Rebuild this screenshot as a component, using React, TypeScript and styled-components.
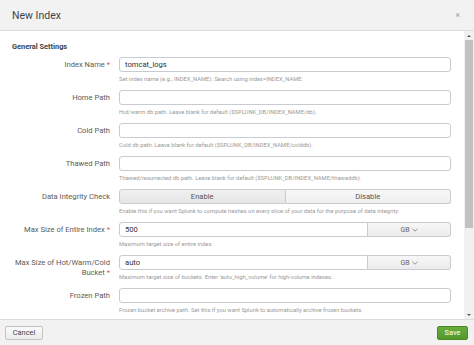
import styled, { createGlobalStyle } from 'styled-components';

const GlobalStyle = createGlobalStyle`
  html, body {
    margin: 0;
    padding: 0;
    width: 474px;
    height: 345px;
    overflow: hidden;
    background: #fff;
    font-family: Roboto, "Liberation Sans", Arial, sans-serif;
    color: #333;
  }
  * { box-sizing: border-box; }
`;

const Modal = styled.div`
  width: 474px;
  height: 345px;
  display: flex;
  flex-direction: column;
  background: #fff;
`;

const Header = styled.div`
  height: 31px;
  flex: none;
  display: flex;
  align-items: center;
  justify-content: space-between;
  padding: 0 14px 0 12px;
  background: #f2f2f2;
  border-bottom: 1px solid #dcdcdc;
`;

const Title = styled.div`
  font-size: 10.5px;
  color: #3c444d;
`;

const Close = styled.span`
  font-size: 9px;
  color: #a0a0a0;
  line-height: 1;
`;

const Body = styled.div`
  flex: 1;
  display: flex;
  overflow: hidden;
`;

const Content = styled.div`
  flex: 1;
  padding: 11px 13px 0 12px;
  overflow: hidden;
`;

const SectionTitle = styled.div`
  font-size: 7.4px;
  font-weight: 700;
  line-height: 10px;
  color: #3c444d;
  margin-bottom: 5px;
`;

const Row = styled.div`
  display: grid;
  grid-template-columns: 98px 1fr;
  column-gap: 9px;
  margin-bottom: 6px;
`;

const Label = styled.div`
  font-size: 7.6px;
  line-height: 10.5px;
  padding-top: 2.5px;
  text-align: right;
  color: #5a5a5a;
`;

const Star = styled.span`
  color: #d6563c;
`;

const Control = styled.div`
  display: flex;
  flex-direction: column;
`;

const InputLine = styled.div`
  display: flex;
`;

const Input = styled.div<{ $joined?: boolean }>`
  flex: 1 0 auto;
  height: 15px;
  display: flex;
  align-items: center;
  padding: 0 5px;
  font-size: 7.6px;
  color: #333;
  background: #fff;
  border: 1px solid #c8ccd0;
  border-radius: ${p => (p.$joined ? '3px 0 0 3px' : '3px')};
`;

const Unit = styled.div`
  width: 83px;
  height: 15px;
  display: flex;
  align-items: center;
  justify-content: center;
  gap: 2px;
  font-size: 7px;
  color: #666;
  background: linear-gradient(#f7f7f7, #ececec);
  border: 1px solid #c8ccd0;
  border-left: none;
  border-radius: 0 3px 3px 0;
`;

const Toggle = styled.div`
  display: flex;
  height: 15px;
`;

const ToggleButton = styled.div<{ $active?: boolean }>`
  flex: 1;
  display: flex;
  align-items: center;
  justify-content: center;
  font-size: 7.6px;
  color: #555;
  border: 1px solid #c8ccd0;
  background: ${p => (p.$active ? 'linear-gradient(#f0f0f0, #e6e6e6)' : 'linear-gradient(#f8f8f8, #efefef)')};
  &:first-child {
    border-radius: 3px 0 0 3px;
  }
  &:last-child {
    border-left: none;
    border-radius: 0 3px 3px 0;
  }
`;

const Help = styled.div`
  margin-top: 3px;
  font-size: 5.8px;
  line-height: 9px;
  color: #9a9a9a;
  white-space: nowrap;
`;

const Scrollbar = styled.div`
  width: 10px;
  flex: none;
  display: flex;
  flex-direction: column;
  background: #f1f1f1;
`;

const Arrow = styled.div<{ $down?: boolean }>`
  height: 9px;
  display: flex;
  align-items: center;
  justify-content: center;
  &::before {
    content: '';
    border-left: 2px solid transparent;
    border-right: 2px solid transparent;
    ${p => (p.$down ? 'border-top: 2px solid #555;' : 'border-bottom: 2px solid #555;')}
  }
`;

const Track = styled.div`
  flex: 1;
  padding: 0 1px;
`;

const Thumb = styled.div`
  height: 188px;
  background: #c1c1c1;
`;

const Footer = styled.div`
  height: 26px;
  flex: none;
  display: flex;
  align-items: center;
  justify-content: space-between;
  padding: 0 6px 0 5px;
  background: #f2f2f2;
  border-top: 1px solid #dcdcdc;
`;

const Button = styled.div<{ $primary?: boolean }>`
  height: 14px;
  display: flex;
  align-items: center;
  justify-content: center;
  font-size: 7.4px;
  border-radius: 2px;
  ${p =>
    p.$primary
      ? `
    width: 31px;
    color: #fff;
    background: linear-gradient(#67ad3d, #54982c);
    border: 1px solid #4b8a27;
  `
      : `
    width: 38px;
    color: #444;
    background: linear-gradient(#fafafa, #ececec);
    border: 1px solid #c3c3c3;
  `}
`;

const Chevron = () => (
  <svg width="6" height="4" viewBox="0 0 6 4">
    <path d="M0.5 0.8 L3 3.2 L5.5 0.8" fill="none" stroke="#777" strokeWidth="0.8" />
  </svg>
);

interface Field {
  label: string;
  required?: boolean;
  value?: string;
  help: string;
  kind?: 'text' | 'toggle' | 'size';
}

const fields: Field[] = [
  { label: 'Index Name', required: true, value: 'tomcat_logs', help: 'Set index name (e.g., INDEX_NAME). Search using index=INDEX_NAME.' },
  { label: 'Home Path', help: 'Hot/warm db path. Leave blank for default ($SPLUNK_DB/INDEX_NAME/db).' },
  { label: 'Cold Path', help: 'Cold db path. Leave blank for default ($SPLUNK_DB/INDEX_NAME/colddb).' },
  { label: 'Thawed Path', help: 'Thawed/resurrected db path. Leave blank for default ($SPLUNK_DB/INDEX_NAME/thaweddb).' },
  { label: 'Data Integrity Check', kind: 'toggle', help: 'Enable this if you want Splunk to compute hashes on every slice of your data for the purpose of data integrity.' },
  { label: 'Max Size of Entire Index', required: true, value: '500', kind: 'size', help: 'Maximum target size of entire index.' },
  { label: 'Max Size of Hot/Warm/Cold Bucket', required: true, value: 'auto', kind: 'size', help: "Maximum target size of buckets. Enter 'auto_high_volume' for high-volume indexes." },
  { label: 'Frozen Path', help: 'Frozen bucket archive path. Set this if you want Splunk to automatically archive frozen buckets.' },
];

const renderControl = (f: Field) => {
  if (f.kind === 'toggle') {
    return (
      <Toggle>
        <ToggleButton $active>Enable</ToggleButton>
        <ToggleButton>Disable</ToggleButton>
      </Toggle>
    );
  }
  if (f.kind === 'size') {
    return (
      <InputLine>
        <Input $joined>{f.value}</Input>
        <Unit>GB <Chevron /></Unit>
      </InputLine>
    );
  }
  return <Input>{f.value}</Input>;
};

const App = () => {
  return (
    <>
      <GlobalStyle />
      <Modal>
        <Header>
          <Title>New Index</Title>
          <Close>×</Close>
        </Header>
        <Body>
          <Content>
            <SectionTitle>General Settings</SectionTitle>
            {fields.map(f => (
              <Row key={f.label}>
                <Label>
                  {f.label}
                  {f.required && <Star> *</Star>}
                </Label>
                <Control>
                  {renderControl(f)}
                  <Help>{f.help}</Help>
                </Control>
              </Row>
            ))}
          </Content>
          <Scrollbar>
            <Arrow />
            <Track>
              <Thumb />
            </Track>
            <Arrow $down />
          </Scrollbar>
        </Body>
        <Footer>
          <Button>Cancel</Button>
          <Button $primary>Save</Button>
        </Footer>
      </Modal>
    </>
  );
};

export default App;
